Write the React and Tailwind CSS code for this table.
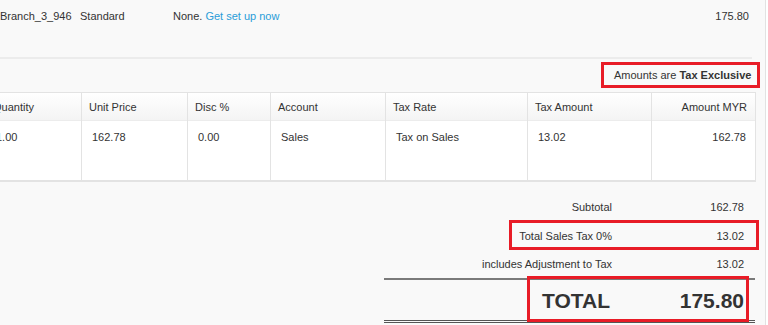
export default function App() {
  const cols = [
    { label: "Quantity", value: "1.00", w: "w-[97px]" },
    { label: "Unit Price", value: "162.78", w: "w-[106px]" },
    { label: "Disc %", value: "0.00", w: "w-[83px]" },
    { label: "Account", value: "Sales", w: "w-[115px]" },
    { label: "Tax Rate", value: "Tax on Sales", w: "w-[142px]" },
    { label: "Tax Amount", value: "13.02", w: "w-[124px]" },
    { label: "Amount MYR", value: "162.78", w: "w-[104px]", right: true },
  ];

  return (
    <div
      className="w-[768px] h-[325px] overflow-hidden bg-white flex text-[11px] text-[#333]"
      style={{ fontFamily: '"Liberation Sans", Arial, sans-serif' }}
    >
      <div className="w-[766px] shrink-0 h-full bg-[#f9f9f9] border-r border-[#e2e2e2] flex flex-col">
        {/* invoice line summary */}
        <div className="h-[57px] flex items-start pt-[9px] leading-[14px] pr-[16px]">
          <span className="w-[80px]">Branch_3_946</span>
          <span className="w-[93px]">Standard</span>
          <span>
            None. <span className="text-[#2a9dd8]">Get set up now</span>
          </span>
          <span className="ml-auto">175.80</span>
        </div>
        <div className="h-[2px] w-[752px] bg-[#ececec]" />

        {/* tax mode */}
        <div className="flex justify-end mt-[3px] pr-[5px]">
          <div className="h-[26px] w-[159px] border-[3px] border-[#e81c27] flex items-center pl-[10px] leading-none">
            Amounts are&nbsp;<b>Tax Exclusive</b>
          </div>
        </div>

        {/* line items table, first column runs off the left edge */}
        <div className="mt-[4px] -ml-[15px] w-[772px] flex">
          {cols.map((c, i) => (
            <div
              key={c.label}
              className={`${c.w} shrink-0 flex flex-col border-t border-b-2 border-[#e3e3e3] ${i === 0 ? "border-l" : ""} border-r`}
            >
              <div
                className={`h-[28px] bg-gradient-to-b from-white to-[#f4f4f4] border-b border-[#ececec] px-[7px] pt-[7px] leading-[14px] ${c.right ? "text-right pr-[8px]" : ""}`}
              >
                {c.label}
              </div>
              <div
                className={`h-[59px] bg-white pt-[9px] leading-[14px] ${c.right ? "text-right pr-[9px]" : "pl-[10px]"}`}
              >
                {c.value}
              </div>
            </div>
          ))}
        </div>

        {/* totals */}
        <div className="ml-[384px] w-[371px] mt-[11px] flex flex-col leading-[14px]">
          <div className="relative h-[28px] flex items-center">
            <span className="w-[228px] text-right">Subtotal</span>
            <span className="w-[132px] text-right">162.78</span>
          </div>
          <div className="relative h-[29px] flex items-center">
            <div className="absolute left-[125px] -top-[1px] w-[250px] h-[30px] border-[3px] border-[#e81c27]" />
            <span className="w-[228px] text-right">Total Sales Tax 0%</span>
            <span className="w-[132px] text-right">13.02</span>
          </div>
          <div className="relative h-[28px] flex items-center">
            <span className="w-[228px] text-right">includes Adjustment to Tax</span>
            <span className="w-[132px] text-right">13.02</span>
          </div>
          <div className="relative h-[45px] border-t-2 border-b-[3px] border-double border-t-[#7a7a7a] border-b-[#555] flex items-center text-[21px] font-bold leading-none text-[#333]">
            <div className="absolute left-[143px] -top-[4px] w-[222px] h-[46px] border-[3px] border-[#e81c27]" />
            <span className="pl-[158px]">TOTAL</span>
            <span className="ml-auto pr-[11px]">175.80</span>
          </div>
        </div>
      </div>
    </div>
  );
}
